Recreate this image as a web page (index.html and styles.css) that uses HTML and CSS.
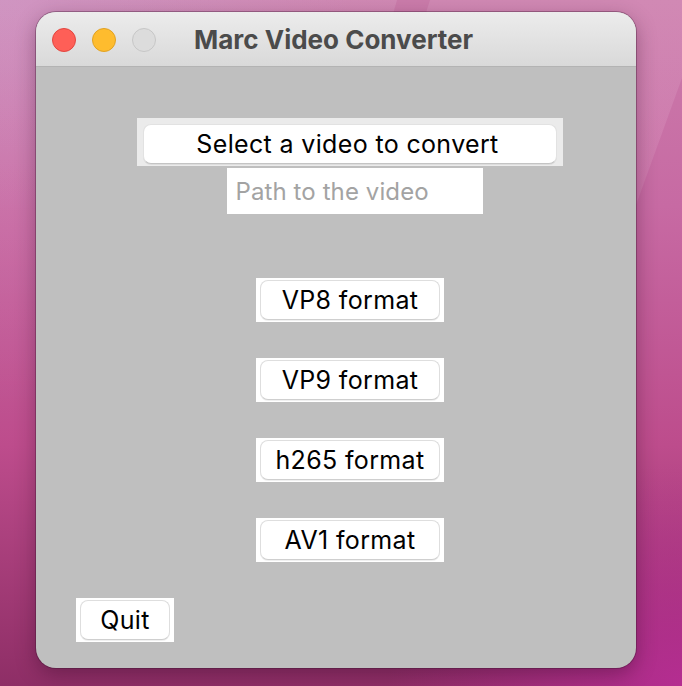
FILE: index.html
```html
<!DOCTYPE html>
<html>
<head>
<meta charset="utf-8">
<title>Marc Video Converter</title>
<link rel="stylesheet" href="styles.css">
</head>
<body>
<div class="desktop">
  <div class="window">
    <div class="titlebar">
      <div class="lights">
        <span class="light red"></span>
        <span class="light yellow"></span>
        <span class="light gray"></span>
      </div>
      <div class="title">Marc Video Converter</div>
    </div>
    <div class="content">
      <div class="column">
        <div class="select-frame"><button class="btn select-btn">Select a video to convert</button></div>
        <div class="entry"><span class="placeholder">Path to the video</span></div>
        <div class="formats">
          <div class="frame"><button class="btn fmt">VP8 format</button></div>
          <div class="frame"><button class="btn fmt">VP9 format</button></div>
          <div class="frame"><button class="btn fmt">h265 format</button></div>
          <div class="frame"><button class="btn fmt">AV1 format</button></div>
        </div>
      </div>
      <div class="quit-row">
        <div class="frame quit-frame"><button class="btn quit">Quit</button></div>
      </div>
    </div>
  </div>
</div>
</body>
</html>
```
FILE: styles.css
```css
html, body {
  margin: 0;
  padding: 0;
  width: 682px;
  height: 686px;
  overflow: hidden;
}
body {
  font-family: "Inter", "Liberation Sans", sans-serif;
}
.desktop {
  position: relative;
  width: 682px;
  height: 686px;
  padding: 12px 0 0 36px;
  box-sizing: border-box;
  background:
    radial-gradient(ellipse 500px 300px at 0% 0%, rgba(200,150,200,0.5), rgba(200,150,200,0) 70%),
    radial-gradient(ellipse 420px 320px at 100% 100%, rgba(185,45,150,0.9), rgba(185,45,150,0) 70%),
    linear-gradient(to bottom, #cb7cab 0%, #c76aa3 30%, #bd4c8c 65%, #8e2e66 100%);
}
.desktop::before {
  content: "";
  position: absolute;
  left: 0;
  top: 0;
  width: 682px;
  height: 686px;
  background: linear-gradient(to bottom, rgba(255,230,245,0.12), rgba(255,230,245,0.04));
  clip-path: polygon(430px 0, 682px 0, 682px 78px, 636px 205px, 560px 420px, 300px 420px);
}
.desktop::after {
  content: "";
  position: absolute;
  left: 0;
  top: 0;
  width: 682px;
  height: 686px;
  background: linear-gradient(to bottom, rgba(255,235,250,0.12), rgba(255,235,250,0) 60%);
  clip-path: polygon(0 0, 397px 0, 200px 686px, 0 686px);
}
.window {
  position: relative;
  z-index: 1;
  width: 600px;
  height: 656px;
  border-radius: 20px;
  overflow: hidden;
  background: #bfbfbf;
  box-shadow: 0 0 0 1px rgba(60,20,50,0.35), 0 6px 20px rgba(40,0,30,0.35);
  display: flex;
  flex-direction: column;
}
.titlebar {
  height: 54px;
  flex: none;
  background: linear-gradient(to bottom, #ececec, #d9d9d9);
  border-bottom: 1px solid #b3b3b3;
  display: flex;
  align-items: center;
  padding-left: 16px;
  box-sizing: content-box;
}
.lights {
  display: flex;
  gap: 16px;
  margin-top: 2px;
}
.light {
  width: 22px;
  height: 22px;
  border-radius: 50%;
  display: block;
  border: 1px solid transparent;
}
.red { background: #fe5f57; border-color: #e2463f; }
.yellow { background: #febc2e; border-color: #e0a123; }
.gray { background: #dcdcdc; border-color: #c6c6c6; }
.title {
  margin-left: 38px;
  font-family: "Inter", "Liberation Sans", sans-serif;
  font-weight: 700;
  font-size: 26px;
  color: #4b4b4b;
  margin-top: 1px;
}
.content {
  flex: 1;
  display: flex;
  flex-direction: column;
}
.column {
  display: flex;
  flex-direction: column;
  align-items: center;
  padding-top: 51px;
  padding-left: 27px;
}
.btn {
  font-family: "Inter", "Liberation Sans", sans-serif;
  font-size: 25px;
  letter-spacing: 0.35px;
  color: #000;
  background: #fff;
  border: 1px solid #dedede;
  border-bottom-color: #cfcfcf;
  border-radius: 8px;
  padding: 0;
  margin: 0;
  display: flex;
  align-items: center;
  justify-content: center;
  box-sizing: border-box;
  box-shadow: 0 1px 0 rgba(0,0,0,0.06);
}
.select-frame {
  width: 426px;
  height: 48px;
  background: #ebebeb;
  padding: 6px 6px 2px;
  box-sizing: border-box;
}
.select-btn {
  width: 100%;
  height: 40px;
  padding-right: 4px;
  border-color: #e2e2e2;
  border-bottom-color: #c4c4c4;
}
.entry {
  margin-top: 2px;
  margin-left: 10px;
  width: 256px;
  height: 46px;
  background: #fff;
  display: flex;
  align-items: center;
  padding-left: 9px;
  box-sizing: border-box;
}
.placeholder {
  font-size: 24px;
  letter-spacing: 0.1px;
  color: #a3a3a3;
}
.formats {
  margin-top: 64px;
  display: flex;
  flex-direction: column;
  gap: 36px;
  margin-left: 1px;
}
.frame {
  width: 188px;
  height: 44px;
  background: #fff;
  padding: 2px 4px;
  box-sizing: border-box;
}
.fmt {
  width: 100%;
  height: 40px;
}
.quit-row {
  margin-top: 36px;
  padding-left: 40px;
  display: flex;
}
.quit-frame {
  width: 98px;
}
.quit {
  width: 100%;
  height: 40px;
}
```
